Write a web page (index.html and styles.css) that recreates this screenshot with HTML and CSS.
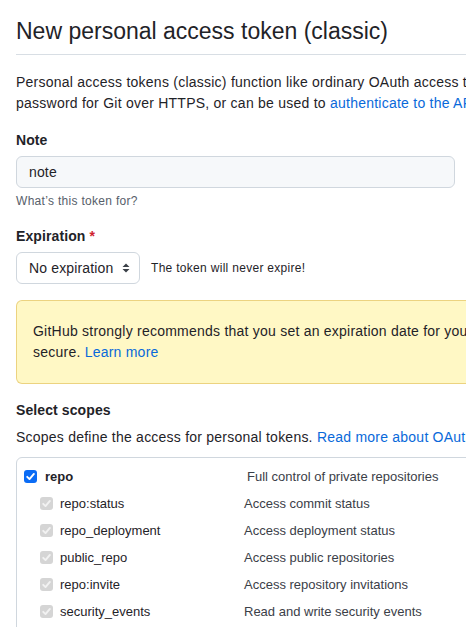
FILE: index.html
```html
<!DOCTYPE html>
<html lang="en">
<head>
<meta charset="utf-8">
<title>New personal access token (classic)</title>
<link rel="stylesheet" href="styles.css">
</head>
<body>
<main class="page">
  <h1 class="title">New personal access token (classic)</h1>
  <p class="intro">Personal access tokens (classic) function like ordinary OAuth access tokens. They can be used instead of a<br>password for Git over HTTPS, or can be used to <a class="link" href="#">authenticate to the API over Basic Authentication</a>.</p>

  <div class="field">
    <label class="label" for="note">Note</label>
    <div class="input">note</div>
    <p class="hint">What’s this token for?</p>
  </div>

  <div class="field">
    <label class="label">Expiration <span class="req">*</span></label>
    <div class="expiry">
      <div class="select">
        <span>No expiration</span>
        <svg class="updown" width="8" height="10" viewBox="0 0 8 10"><path d="M4 0.5 L7.5 4 H0.5 Z M4 9.5 L0.5 6 H7.5 Z" fill="#3b4048"/></svg>
      </div>
      <span class="expiry-note">The token will never expire!</span>
    </div>
  </div>

  <div class="flash">GitHub strongly recommends that you set an expiration date for your token to help keep your information<br>secure. <a class="link" href="#">Learn more</a></div>

  <h2 class="label scopes-title">Select scopes</h2>
  <p class="scopes-desc">Scopes define the access for personal tokens. <a class="link" href="#">Read more about OAuth scopes.</a></p>

  <div class="scopes">
    <div class="row parent">
      <span class="name"><svg class="cb" width="13" height="13" viewBox="0 0 13 13"><rect width="13" height="13" rx="3" fill="#0b6cf5"/><path d="M3.2 6.8 L5.5 9.1 L9.9 3.9" fill="none" stroke="#fff" stroke-width="1.9" stroke-linecap="round" stroke-linejoin="round"/></svg><b>repo</b></span>
      <span class="desc">Full control of private repositories</span>
    </div>
    <div class="row child">
      <span class="name"><svg class="cb" width="13" height="13" viewBox="0 0 13 13"><rect width="13" height="13" rx="3" fill="#d5d5d5"/><path d="M3.2 6.8 L5.5 9.1 L9.9 3.9" fill="none" stroke="#f2f2f2" stroke-width="1.9" stroke-linecap="round" stroke-linejoin="round"/></svg>repo:status</span>
      <span class="desc">Access commit status</span>
    </div>
    <div class="row child">
      <span class="name"><svg class="cb" width="13" height="13" viewBox="0 0 13 13"><rect width="13" height="13" rx="3" fill="#d5d5d5"/><path d="M3.2 6.8 L5.5 9.1 L9.9 3.9" fill="none" stroke="#f2f2f2" stroke-width="1.9" stroke-linecap="round" stroke-linejoin="round"/></svg>repo_deployment</span>
      <span class="desc">Access deployment status</span>
    </div>
    <div class="row child">
      <span class="name"><svg class="cb" width="13" height="13" viewBox="0 0 13 13"><rect width="13" height="13" rx="3" fill="#d5d5d5"/><path d="M3.2 6.8 L5.5 9.1 L9.9 3.9" fill="none" stroke="#f2f2f2" stroke-width="1.9" stroke-linecap="round" stroke-linejoin="round"/></svg>public_repo</span>
      <span class="desc">Access public repositories</span>
    </div>
    <div class="row child">
      <span class="name"><svg class="cb" width="13" height="13" viewBox="0 0 13 13"><rect width="13" height="13" rx="3" fill="#d5d5d5"/><path d="M3.2 6.8 L5.5 9.1 L9.9 3.9" fill="none" stroke="#f2f2f2" stroke-width="1.9" stroke-linecap="round" stroke-linejoin="round"/></svg>repo:invite</span>
      <span class="desc">Access repository invitations</span>
    </div>
    <div class="row child">
      <span class="name"><svg class="cb" width="13" height="13" viewBox="0 0 13 13"><rect width="13" height="13" rx="3" fill="#d5d5d5"/><path d="M3.2 6.8 L5.5 9.1 L9.9 3.9" fill="none" stroke="#f2f2f2" stroke-width="1.9" stroke-linecap="round" stroke-linejoin="round"/></svg>security_events</span>
      <span class="desc">Read and write security events</span>
    </div>
  </div>
</main>
</body>
</html>
```

FILE: styles.css
```css
html, body {
  margin: 0;
  padding: 0;
  overflow: hidden;
  background: #ffffff;
}

body {
  font-family: "Liberation Sans", Arial, sans-serif;
  color: #1f2328;
  font-size: 14px;
  line-height: 21px;
}

.page {
  width: 900px;
  padding: 16px 0 0 16px;
}

.title {
  margin: 0;
  font-size: 23px;
  font-weight: 400;
  line-height: 30px;
  padding-bottom: 8px;
  border-bottom: 1px solid #d8dee4;
  color: #1f2328;
}

.intro {
  margin: 17px 0 0;
  letter-spacing: 0.24px;
  white-space: nowrap;
}

.link {
  color: #0969da;
  text-decoration: none;
}

.field {
  margin-top: 16px;
}

.label {
  display: block;
  margin: 0;
  font-size: 14px;
  font-weight: 700;
  line-height: 21px;
  letter-spacing: 0.1px;
}

.req {
  color: #cf222e;
}

.input {
  box-sizing: border-box;
  margin-top: 5px;
  width: 439px;
  height: 32px;
  padding: 5px 12px;
  background: #f6f8fa;
  border: 1px solid #d0d7de;
  border-radius: 6px;
  font-size: 14px;
  line-height: 20px;
  letter-spacing: 0.15px;
}

.hint {
  margin: 4px 0 0;
  font-size: 12px;
  line-height: 18px;
  color: #57606a;
  letter-spacing: 0.3px;
}

.expiry {
  display: flex;
  align-items: center;
  gap: 11px;
  margin-top: 5px;
}

.select {
  box-sizing: border-box;
  display: flex;
  align-items: center;
  justify-content: space-between;
  width: 124px;
  height: 32px;
  padding: 0 9px 0 12px;
  border: 1px solid #d0d7de;
  border-radius: 6px;
  background: #ffffff;
  font-size: 14px;
  letter-spacing: 0.15px;
}

.updown {
  display: block;
}

.expiry-note {
  font-size: 12px;
  letter-spacing: 0.3px;
  color: #1f2328;
}

.flash {
  box-sizing: border-box;
  margin-top: 16px;
  padding: 20px 16px;
  background: #fff8c5;
  border: 1px solid rgba(212, 167, 44, 0.45);
  border-radius: 6px;
  white-space: nowrap;
  letter-spacing: 0.23px;
}

.scopes-title {
  margin-top: 16px;
}

.scopes-desc {
  margin: 6px 0 0;
  letter-spacing: 0.23px;
  white-space: nowrap;
}

.scopes {
  margin-top: 9px;
  padding: 5px 0 10px;
  border: 1px solid #d0d7de;
  border-radius: 6px;
}

.row {
  display: flex;
  align-items: center;
  height: 27px;
  font-size: 13px;
}

.name {
  display: flex;
  align-items: center;
  gap: 8px;
}

.cb {
  display: block;
  flex: none;
}

.parent {
  padding-left: 7px;
}

.parent .name {
  width: 223px;
}

.parent b {
  font-weight: 700;
}

.child {
  padding-left: 23px;
}

.child .name {
  width: 204px;
  gap: 7px;
}

.desc {
  color: #3b4048;
}
```
